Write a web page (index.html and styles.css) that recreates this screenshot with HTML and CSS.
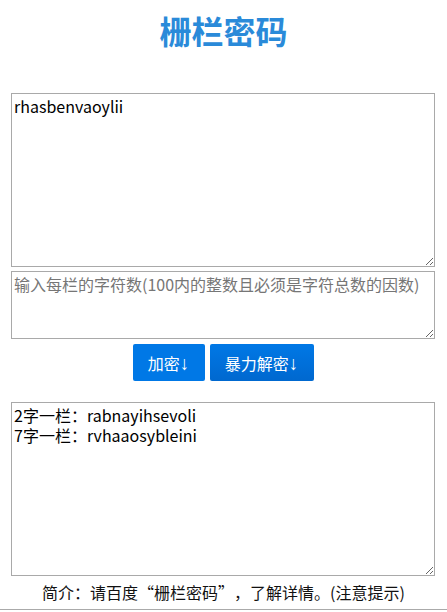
FILE: index.html
```html
<!DOCTYPE html>
<html lang="zh-CN">
<head>
<meta charset="utf-8">
<title>栅栏密码</title>
<link rel="stylesheet" href="styles.css">
</head>
<body>
<h1 class="title">栅栏密码</h1>
<div class="wrap">
  <textarea class="box box-input">rhasbenvaoylii</textarea>
  <textarea class="box box-key" placeholder="输入每栏的字符数(100内的整数且必须是字符总数的因数)"></textarea>
  <div class="actions">
    <button class="btn btn-encrypt">加密<span class="arrow">↓</span></button>
    <button class="btn btn-dark">暴力解密<span class="arrow">↓</span></button>
  </div>
  <textarea class="box box-output">2字一栏：rabnayihsevoli
7字一栏：rvhaaosybleini</textarea>
</div>
<div class="footer">简介：请百度<span class="q-open">“</span>栅栏密码<span class="q-close">”</span>，了解详情。(注意提示)</div>
<div class="rule"></div>
</body>
</html>
```
FILE: styles.css
```css
html, body {
  margin: 0;
  padding: 0;
  background: #fff;
}
body {
  font-family: "Microsoft YaHei", "Noto Sans CJK SC", "Noto Sans", sans-serif;
  color: #000;
  font-size: 16px;
}
.title {
  margin: 10px 0 43px;
  line-height: 40px;
  font-size: 32px;
  font-weight: bold;
  text-align: center;
  color: #2a8ad9;
}
.wrap {
  width: 424px;
  margin-left: 11px;
}
.box {
  display: block;
  box-sizing: border-box;
  width: 424px;
  margin: 0;
  border: 1px solid #a9a9a9;
  padding: 2px 2px;
  font-family: "Microsoft YaHei", "Noto Sans CJK SC", "Noto Sans", sans-serif;
  font-size: 16px;
  line-height: 20px;
  color: #000;
  resize: both;
  outline: none;
}
.box::placeholder {
  color: #767676;
}
.box-input {
  height: 174px;
}
.box-key {
  margin-top: 4px;
  height: 68px;
}
.actions {
  display: flex;
  justify-content: center;
  gap: 5px;
  margin-top: 5px;
}
.btn {
  height: 37px;
  padding: 0;
  border: none;
  border-radius: 2px;
  background: #0078e6;
  color: #fff;
  font-family: "Microsoft YaHei", "Noto Sans CJK SC", "Noto Sans", sans-serif;
  font-size: 16px;
  white-space: nowrap;
  text-align: center;
}
.btn-encrypt {
  width: 72px;
}
.btn-dark {
  width: 104px;
  background: linear-gradient(#0078e6, #0068cf);
}
.arrow {
  font-family: "Liberation Sans", "DejaVu Sans", sans-serif;
  font-size: 19px;
  line-height: 1;
}
.box-output {
  margin-top: 21px;
  height: 174px;
}
.footer {
  height: 33px;
  line-height: 33px;
  text-align: center;
  font-size: 16px;
  color: #111;
}
.q-open,
.q-close {
  display: inline-block;
  width: 16px;
}
.q-open {
  text-align: right;
}
.q-close {
  text-align: left;
}
.rule {
  border-top: 1px solid #aaa;
}
```
